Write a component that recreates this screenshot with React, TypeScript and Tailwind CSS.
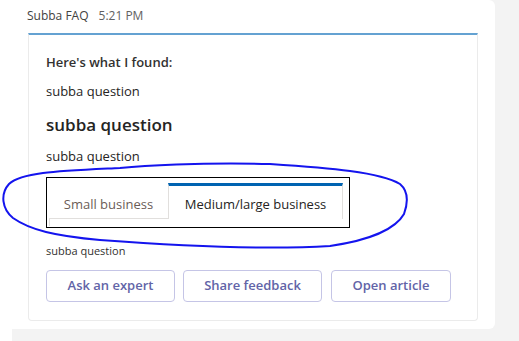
import React from "react";

const font = { fontFamily: '"Open Sans", "Noto Sans", sans-serif' };

const Ellipse = () => (
  <svg
    className="absolute left-0 top-0 pointer-events-none"
    width={519}
    height={341}
    viewBox="0 0 519 341"
  >
    <path
      d="M 120 168 C 60 171, 22 172, 9 184 C 0 194, 2 209, 13 218 C 30 230, 55 236, 100 240 C 180 246, 260 250, 330 246 C 372 240, 396 228, 404 214 C 409 200, 407 190, 400 184 C 380 172, 330 168, 270 164 C 200 162, 140 166, 120 168 Z"
      fill="none"
      stroke="#1414ee"
      strokeWidth={2}
    />
  </svg>
);

export default function App() {
  return (
    <div
      className="relative w-[519px] h-[341px] bg-white overflow-hidden text-[#252423]"
      style={font}
    >
      <div className="ml-[12px] h-full bg-[#f3f3f3]">
        <div className="-ml-[12px] w-[495px] h-[329px] bg-white rounded-r-md pl-[28px] pt-[7px]">
          <div className="flex items-center h-[18px] text-[12px] leading-[18px]">
            <span className="text-[#424242] ml-[-1px]">Subba FAQ</span>
            <span className="ml-[10px] text-[#616161]">5:21 PM</span>
          </div>
          <div className="mt-[8px] w-[450px] border border-[#ebebeb] border-t-2 border-t-[#64a2d2] rounded-b px-[17px] pt-[17px] pb-[18px]">
            <div className="h-[20px] leading-[20px] text-[13px] font-semibold text-[#323130]">
              Here's what I found:
            </div>
            <div className="mt-[9px] h-[20px] leading-[20px] text-[13px]">
              subba question
            </div>
            <div className="mt-[12px] h-[24px] leading-[24px] text-[17px] font-semibold">
              subba question
            </div>
            <div className="mt-[9px] h-[20px] leading-[20px] text-[13px]">
              subba question
            </div>
            <div className="mt-[11px] w-[304px] h-[51px] border border-black pl-[2px] pt-[5px]">
              <div className="flex h-[36px]">
                <div className="w-[119px] border-b border-[#e1dfdd] flex items-center justify-center text-[13px] text-[#6b5d57] pt-[8px]">
                  Small business
                </div>
                <div className="w-[175px] border-t-[3px] border-t-[#0063b1] border-l border-r border-[#e1dfdd] flex items-center justify-center text-[13px] text-[#252423] pt-[5px]">
                  Medium/large business
                </div>
              </div>
              <div className="w-[119px] h-[7px] border-l border-[#e1dfdd]" />
            </div>
            <div className="mt-[15px] h-[16px] leading-[16px] text-[11px] text-[#323130]">
              subba question
            </div>
            <div className="mt-[11px] flex">
              <button className="w-[129px] h-[32px] rounded border border-[#c5c5e6] text-[13px] font-semibold text-[#6264a7]">
                Ask an expert
              </button>
              <button className="ml-[8px] w-[139px] h-[32px] rounded border border-[#c5c5e6] text-[13px] font-semibold text-[#6264a7]">
                Share feedback
              </button>
              <button className="ml-[9px] w-[120px] h-[32px] rounded border border-[#c5c5e6] text-[13px] font-semibold text-[#6264a7]">
                Open article
              </button>
            </div>
          </div>
        </div>
      </div>
      <Ellipse />
    </div>
  );
}
